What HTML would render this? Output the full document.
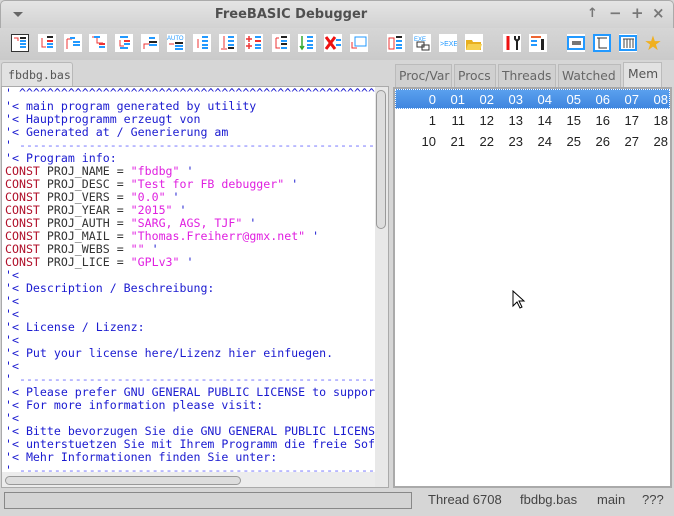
<!DOCTYPE html>
<html><head><meta charset="utf-8"><style>
*{margin:0;padding:0;box-sizing:border-box}
body{width:674px;height:516px;overflow:hidden;background:#d6d6d6;font-family:"DejaVu Sans","Liberation Sans",sans-serif;position:relative}
.abs{position:absolute}
#title{left:0;top:0;width:674px;height:28px;background:linear-gradient(#e4e4e4,#d2d2d2);border:1px solid #aaa;border-bottom:none;border-radius:5px 5px 0 0}
#title .t{left:0;width:580px;top:6px;text-align:center;font-weight:bold;font-size:13px;color:#505050}
#tb{left:0;top:28px;width:674px;height:32px;background:linear-gradient(#d6d6d6,#cacaca)}
.ic{position:absolute;top:34px;width:18px;height:18px;background:#fff}
pre{font-family:"DejaVu Sans Mono","Liberation Mono",monospace;font-size:11.6px;line-height:13px;color:#1a1ad0}
.k{color:#b0102a}.n{color:#333}.s{color:#e020e0}.d{color:#7070ff}
.mem span{position:absolute;width:28px;text-align:right}
.tab{position:absolute;top:64px;height:23px;background:#d0d0d0;border:1px solid #bbb;border-bottom:none;font-size:12.3px;color:#666;padding:4px 0 0 3px;font-family:'DejaVu Sans',sans-serif;white-space:nowrap;overflow:hidden}
</style></head><body>
<div id="title" class="abs"><div class="abs" style="left:12px;top:11px;width:0;height:0;border-left:5px solid transparent;border-right:5px solid transparent;border-top:5px solid #666"></div>
<div class="abs t">FreeBASIC Debugger</div>
<div class="abs" style="left:586px;top:5px;font-size:13px;color:#777;font-weight:bold">↑</div>
<div class="abs" style="left:608px;top:3px;font-size:15px;color:#777;font-weight:bold">−</div>
<div class="abs" style="left:630px;top:3px;font-size:15px;color:#777;font-weight:bold">+</div>
<div class="abs" style="left:651px;top:3px;font-size:15px;color:#777;font-weight:bold">×</div>
</div>
<div id="tb" class="abs"></div>
<div class="ic" style="left:11px;border:1px solid #333"><svg width="16" height="16"><path d="M2 3h4v3" stroke="#e33" fill="none"/><rect x="8" y="2" width="6" height="2" fill="#222"/><rect x="8" y="5" width="6" height="2" fill="#29f"/><rect x="8" y="8" width="6" height="2" fill="#29f"/><rect x="8" y="11" width="6" height="2" fill="#29f"/></svg></div>
<div class="ic" style="left:38px"><svg width="18" height="18"><path d="M4 4v9h4" stroke="#e33" fill="none"/><rect x="9" y="2" width="6" height="2" fill="#222"/><rect x="9" y="6" width="6" height="2" fill="#e33"/><rect x="9" y="9" width="6" height="2" fill="#29f"/><rect x="9" y="12" width="6" height="2" fill="#29f"/></svg></div>
<div class="ic" style="left:64px"><svg width="18" height="18"><path d="M3 5h5M3 5v10" stroke="#e33" fill="none"/><rect x="6" y="3" width="5" height="2" fill="#29f"/><rect x="9" y="7" width="7" height="2" fill="#29f"/><rect x="9" y="10" width="7" height="2" fill="#29f"/></svg></div>
<div class="ic" style="left:89px"><svg width="18" height="18"><path d="M3 3h5v6h6" stroke="#e33" fill="none"/><rect x="5" y="2" width="6" height="2" fill="#29f"/><rect x="10" y="9" width="6" height="2" fill="#e33"/><rect x="10" y="12" width="6" height="2" fill="#29f"/></svg></div>
<div class="ic" style="left:115px"><svg width="18" height="18"><path d="M5 6v6h4" stroke="#e33" fill="none"/><rect x="5" y="2" width="8" height="2" fill="#29f"/><rect x="9" y="6" width="6" height="2" fill="#e33"/><rect x="9" y="9" width="6" height="2" fill="#29f"/><rect x="5" y="13" width="8" height="2" fill="#29f"/></svg></div>
<div class="ic" style="left:141px"><svg width="18" height="18"><path d="M3 15v-5h6" stroke="#e33" fill="none"/><rect x="8" y="3" width="6" height="2" fill="#29f"/><rect x="8" y="7" width="8" height="2" fill="#222"/><rect x="8" y="10" width="8" height="2" fill="#29f"/></svg></div>
<div class="ic" style="left:167px"><svg width="18" height="18"><text x="0" y="6" font-size="6" fill="#29f" font-family="Liberation Sans">AUTO</text><path d="M2 10h5" stroke="#e33"/><rect x="8" y="8" width="8" height="2" fill="#222"/><rect x="8" y="11" width="8" height="2" fill="#29f"/><rect x="8" y="14" width="8" height="2" fill="#29f"/></svg></div>
<div class="ic" style="left:193px"><svg width="18" height="18"><path d="M5 5v9" stroke="#e33"/><rect x="9" y="2" width="6" height="2" fill="#29f"/><rect x="9" y="6" width="6" height="2" fill="#29f"/><rect x="9" y="10" width="6" height="2" fill="#29f"/><rect x="9" y="13" width="6" height="2" fill="#29f"/></svg></div>
<div class="ic" style="left:219px"><svg width="18" height="18"><path d="M5 2v12M2 15h6" stroke="#e33"/><rect x="9" y="2" width="6" height="2" fill="#29f"/><rect x="9" y="6" width="6" height="2" fill="#29f"/><rect x="9" y="10" width="6" height="2" fill="#29f"/><rect x="9" y="13" width="6" height="2" fill="#222"/></svg></div>
<div class="ic" style="left:245px"><svg width="18" height="18"><path d="M1 5h6M4 2v6M1 12h6M4 9v6" stroke="#e33" stroke-width="1.5"/><rect x="10" y="2" width="6" height="2" fill="#29f"/><rect x="10" y="6" width="6" height="2" fill="#e33"/><rect x="10" y="10" width="6" height="2" fill="#29f"/><rect x="10" y="13" width="6" height="2" fill="#29f"/></svg></div>
<div class="ic" style="left:272px"><svg width="18" height="18"><path d="M4 4v10h4M4 4h3" stroke="#e33" fill="none"/><rect x="9" y="2" width="6" height="2" fill="#222"/><rect x="9" y="6" width="6" height="2" fill="#29f"/><rect x="9" y="9" width="6" height="2" fill="#222"/><rect x="9" y="13" width="6" height="2" fill="#29f"/></svg></div>
<div class="ic" style="left:298px"><svg width="18" height="18"><path d="M4 2v13M2 12l2 3 2-3" stroke="#3a3" fill="none" stroke-width="1.5"/><rect x="9" y="2" width="6" height="2" fill="#29f"/><rect x="9" y="6" width="6" height="2" fill="#29f"/><rect x="9" y="10" width="6" height="2" fill="#29f"/><rect x="9" y="13" width="6" height="2" fill="#29f"/></svg></div>
<div class="ic" style="left:324px"><svg width="18" height="18"><path d="M2 3l9 12M11 3L2 15" stroke="#e11" stroke-width="3"/><rect x="12" y="5" width="5" height="2" fill="#29f"/><rect x="12" y="10" width="5" height="2" fill="#29f"/></svg></div>
<div class="ic" style="left:350px"><svg width="18" height="18"><rect x="5" y="3" width="11" height="9" fill="none" stroke="#29f"/><path d="M2 8v6h5" stroke="#e33" fill="none"/></svg></div>
<div class="ic" style="left:387px"><svg width="18" height="18"><rect x="2" y="4" width="5" height="11" fill="none" stroke="#e33"/><rect x="9" y="2" width="6" height="2" fill="#222"/><rect x="9" y="6" width="6" height="2" fill="#29f"/><rect x="9" y="10" width="6" height="2" fill="#29f"/><rect x="9" y="13" width="6" height="2" fill="#29f"/></svg></div>
<div class="ic" style="left:413px"><svg width="18" height="18"><text x="1" y="7" font-size="6" fill="#29f" font-family="Liberation Sans">EXE</text><rect x="4" y="8" width="7" height="5" fill="none" stroke="#333"/><rect x="9" y="11" width="7" height="5" fill="none" stroke="#333"/></svg></div>
<div class="ic" style="left:439px"><svg width="18" height="18"><text x="1" y="12" font-size="7" fill="#29f" font-family="Liberation Sans">&gt;EXE</text></svg></div>
<div class="ic" style="left:465px"><svg width="18" height="18"><path d="M1 6h6l1 2h8v8H1z" fill="#e8b020"/><path d="M3 10h14l-2 6H1z" fill="#f6d050"/></svg></div>
<div class="ic" style="left:503px"><svg width="18" height="18"><path d="M5 2v14" stroke="#e11" stroke-width="3"/><path d="M12 2v3l2 2 2-2V2M14 7v9" stroke="#222" stroke-width="2" fill="none"/></svg></div>
<div class="ic" style="left:529px"><svg width="18" height="18"><rect x="2" y="2" width="10" height="2" fill="#e63"/><rect x="2" y="6" width="6" height="2" fill="#29f"/><rect x="2" y="10" width="6" height="2" fill="#29f"/><rect x="12" y="5" width="3" height="11" fill="#222"/></svg></div>
<div class="ic" style="left:567px"><svg width="18" height="18"><rect x="1" y="3" width="16" height="12" fill="none" stroke="#29f" stroke-width="2"/><rect x="5" y="7" width="9" height="4" fill="#777"/></svg></div>
<div class="ic" style="left:593px"><svg width="18" height="18"><rect x="1" y="1" width="16" height="16" fill="none" stroke="#29f" stroke-width="2"/><path d="M4 4h10M6 4v10h8" stroke="#333" fill="none"/></svg></div>
<div class="ic" style="left:619px"><svg width="18" height="18"><rect x="1" y="2" width="16" height="14" fill="none" stroke="#29f" stroke-width="2"/><path d="M5 5v9M8 5v9M11 5v9M14 5v9M4 5h11" stroke="#444"/></svg></div>
<div class="abs" style="left:644px;top:31px;font-size:20px;color:#f0b020">★</div>

<div class="abs" style="left:1px;top:62px;width:72px;height:25px;background:#e2e2e2;border:1px solid #b8b8b8;border-bottom:none;border-radius:3px 3px 0 0;font-family:'DejaVu Sans Mono',monospace;font-size:11.6px;color:#555;padding:5px 0 0 6px">fbdbg.bas</div>
<div class="abs" style="left:1px;top:86px;width:388px;height:402px;background:#e4e4e4;border:1px solid #aaa"></div>
<div class="abs" style="left:2px;top:87px;width:373px;height:385px;background:#fff;overflow:hidden">
<pre class="abs" style="left:3px;top:0px;white-space:pre">' <span>^^^^^^^^^^^^^^^^^^^^^^^^^^^^^^^^^^^^^^^^^^^^^^^^^^^^^^</span>
'&lt; main program generated by utility
'&lt; Hauptprogramm erzeugt von
'&lt; Generated at / Generierung am
' <span class="d">-----------------------------------------------------</span>
'&lt; Program info:
<span class="k">CONST</span> <span class="n">PROJ_NAME =</span> <span class="s">"fbdbg"</span> '
<span class="k">CONST</span> <span class="n">PROJ_DESC =</span> <span class="s">"Test for FB debugger"</span> '
<span class="k">CONST</span> <span class="n">PROJ_VERS =</span> <span class="s">"0.0"</span> '
<span class="k">CONST</span> <span class="n">PROJ_YEAR =</span> <span class="s">"2015"</span> '
<span class="k">CONST</span> <span class="n">PROJ_AUTH =</span> <span class="s">"SARG, AGS, TJF"</span> '
<span class="k">CONST</span> <span class="n">PROJ_MAIL =</span> <span class="s">"Thomas.Freiherr@gmx.net"</span> '
<span class="k">CONST</span> <span class="n">PROJ_WEBS =</span> <span class="s">""</span> '
<span class="k">CONST</span> <span class="n">PROJ_LICE =</span> <span class="s">"GPLv3"</span> '
'&lt;
'&lt; Description / Beschreibung:
'&lt;
'&lt;
'&lt; License / Lizenz:
'&lt;
'&lt; Put your license here/Lizenz hier einfuegen.
'&lt;
' <span class="d">-----------------------------------------------------</span>
'&lt; Please prefer GNU GENERAL PUBLIC LICENSE to support
'&lt; For more information please visit:
'&lt;
'&lt; Bitte bevorzugen Sie die GNU GENERAL PUBLIC LICENSE
'&lt; unterstuetzen Sie mit Ihrem Programm die freie Soft
'&lt; Mehr Informationen finden Sie unter:
' <span class="d">-----------------------------------------------------</span></pre>
</div>
<div class="abs" style="left:375px;top:87px;width:13px;height:400px;background:#e8e8e8"></div>
<div class="abs" style="left:376px;top:90px;width:10px;height:139px;border:1px solid #999;border-radius:5px;background:#ddd"></div>
<div class="abs" style="left:2px;top:472px;width:373px;height:15px;background:#ececec"></div>
<div class="abs" style="left:5px;top:476px;width:236px;height:9px;border:1px solid #999;border-radius:5px;background:#ddd"></div>

<div class="tab" style="left:395px;width:57px">Proc/Var</div>
<div class="tab" style="left:454px;width:42px">Procs</div>
<div class="tab" style="left:498px;width:58px">Threads</div>
<div class="tab" style="left:558px;width:63px">Watched</div>
<div class="tab" style="left:623px;top:62px;width:39px;height:26px;background:#e2e2e2;color:#555;padding-top:4px;padding-left:4px">Mem</div>
<div class="abs" style="left:393px;top:87px;width:279px;height:401px;background:#fff;border:2px solid #aaa"></div>
<div class="abs" style="left:395px;top:89px;width:275px;height:20px;background:linear-gradient(#5aa0ee,#3f86df);border:1px dotted #fff"></div>
<div class="abs mem" style="left:0;top:92px;font-size:13px;font-family:'Liberation Sans',sans-serif;color:#fff">
<span style="left:408px">0</span><span style="left:437px">01</span><span style="left:466px">02</span><span style="left:495px">03</span><span style="left:524px">04</span><span style="left:553px">05</span><span style="left:582px">06</span><span style="left:611px">07</span><span style="left:640px">08</span></div>
<div class="abs mem" style="left:0;top:113px;font-size:13px;font-family:'Liberation Sans',sans-serif;color:#222">
<span style="left:408px">1</span><span style="left:437px">11</span><span style="left:466px">12</span><span style="left:495px">13</span><span style="left:524px">14</span><span style="left:553px">15</span><span style="left:582px">16</span><span style="left:611px">17</span><span style="left:640px">18</span></div>
<div class="abs mem" style="left:0;top:134px;font-size:13px;font-family:'Liberation Sans',sans-serif;color:#222">
<span style="left:408px">10</span><span style="left:437px">21</span><span style="left:466px">22</span><span style="left:495px">23</span><span style="left:524px">24</span><span style="left:553px">25</span><span style="left:582px">26</span><span style="left:611px">27</span><span style="left:640px">28</span></div>
<svg class="abs" style="left:512px;top:290px" width="14" height="20"><path d="M1 1v15l4-4 3 6 2-1-3-6h5z" fill="#fff" stroke="#000"/></svg>

<div class="abs" style="left:4px;top:492px;width:408px;height:17px;border:1px solid #888;background:#d4d4d4"></div>
<div class="abs" style="left:428px;top:492px;font-size:13px;color:#444;font-family:'Liberation Sans',sans-serif">Thread 6708</div>
<div class="abs" style="left:520px;top:492px;font-size:13px;color:#444;font-family:'Liberation Sans',sans-serif">fbdbg.bas</div>
<div class="abs" style="left:597px;top:492px;font-size:13px;color:#444;font-family:'Liberation Sans',sans-serif">main</div>
<div class="abs" style="left:642px;top:492px;font-size:13px;color:#444;font-family:'Liberation Sans',sans-serif">???</div>
</body></html>
